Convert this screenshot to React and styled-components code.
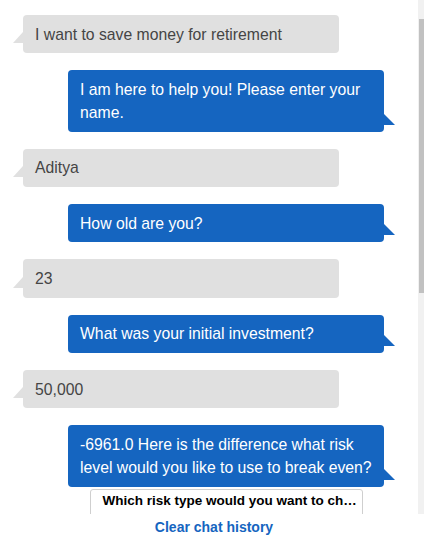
import React from "react";
import styled, { createGlobalStyle, css } from "styled-components";

const GlobalStyle = createGlobalStyle`
  html, body {
    margin: 0;
    padding: 0;
    background: #fff;
  }
  body {
    font-family: "Liberation Sans", Arial, sans-serif;
  }
`;

const BLUE = "#1565c0";
const GREY = "#e0e0e0";

const Page = styled.div`
  width: 424px;
  height: 541px;
  display: flex;
  flex-direction: column;
  overflow: hidden;
`;

const ChatWindow = styled.div`
  flex: none;
  display: flex;
  height: 514px;
`;

const Scroller = styled.div`
  flex: 1;
  overflow-y: auto;
  scrollbar-width: none;

  &::-webkit-scrollbar {
    display: none;
  }
`;

const ScrollTrack = styled.div`
  flex: none;
  width: 6px;
  background: #f1f1f1;
  padding-top: 19px;
  box-sizing: border-box;
`;

const ScrollThumb = styled.div`
  margin-left: 1px;
  height: 274px;
  background: #c1c1c1;
`;

const MessageList = styled.div`
  display: flex;
  flex-direction: column;
  padding: 15px 34px 290px 23px;
`;

const Row = styled.div`
  display: flex;
  justify-content: ${({ $from }) => ($from === "bot" ? "flex-end" : "flex-start")};
  margin-bottom: ${({ $tight }) => ($tight ? "2px" : "17px")};
`;

const Bubble = styled.div`
  position: relative;
  width: 316px;
  box-sizing: border-box;
  padding: 7.5px 8px 7.5px 12px;
  font-size: 15.75px;
  line-height: 23.3px;
  border-radius: 4px;

  ${({ $from }) =>
    $from === "bot"
      ? css`
          background: ${BLUE};
          color: #fff;
          &::after {
            content: "";
            position: absolute;
            right: -11px;
            bottom: 7px;
            width: 0;
            height: 0;
            border-bottom: 11px solid ${BLUE};
            border-right: 11px solid transparent;
          }
        `
      : css`
          background: ${GREY};
          color: #454545;
          &::before {
            content: "";
            position: absolute;
            left: -10px;
            bottom: 10px;
            width: 0;
            height: 0;
            border-bottom: 11px solid ${GREY};
            border-left: 10px solid transparent;
          }
        `}
`;

const Options = styled.div`
  align-self: flex-end;
  width: 316px;
  display: flex;
  flex-direction: column;
  align-items: center;
  gap: 6px;
`;

const QuickReply = styled.button`
  width: 273px;
  box-sizing: border-box;
  padding: 3px 4px 9px 12px;
  border: 1px solid #cfcfcf;
  border-radius: 3px;
  background: #fff;
  color: #000;
  font: bold 13.5px/16px "Liberation Sans", Arial, sans-serif;
  text-align: left;
  white-space: nowrap;
  overflow: hidden;
  text-overflow: ellipsis;
  cursor: pointer;
`;

const Footer = styled.div`
  display: flex;
  justify-content: center;
  padding: 5px 0 0 4px;
`;

const ClearLink = styled.button`
  background: none;
  border: none;
  padding: 0;
  color: ${BLUE};
  font: bold 14px/16px "Liberation Sans", Arial, sans-serif;
  cursor: pointer;
`;

const messages = [
  { from: "user", text: "I want to save money for retirement" },
  { from: "bot", text: "I am here to help you! Please enter your name." },
  { from: "user", text: "Aditya" },
  { from: "bot", text: "How old are you?" },
  { from: "user", text: "23" },
  { from: "bot", text: "What was your initial investment?" },
  { from: "user", text: "50,000" },
  {
    from: "bot",
    text: "-6961.0 Here is the difference what risk level would you like to use to break even?",
  },
];

const options = [
  "Which risk type would you want to choose?",
  "Low risk",
  "Medium risk",
  "High risk",
];

export default function App() {
  return (
    <>
      <GlobalStyle />
      <Page>
        <ChatWindow>
          <Scroller>
            <MessageList>
              {messages.map((m, i) => (
                <Row key={i} $from={m.from} $tight={i === messages.length - 1}>
                  <Bubble $from={m.from}>{m.text}</Bubble>
                </Row>
              ))}
              <Options>
                {options.map((o) => (
                  <QuickReply key={o}>{o}</QuickReply>
                ))}
              </Options>
            </MessageList>
          </Scroller>
          <ScrollTrack>
            <ScrollThumb />
          </ScrollTrack>
        </ChatWindow>
        <Footer>
          <ClearLink>Clear chat history</ClearLink>
        </Footer>
      </Page>
    </>
  );
}
